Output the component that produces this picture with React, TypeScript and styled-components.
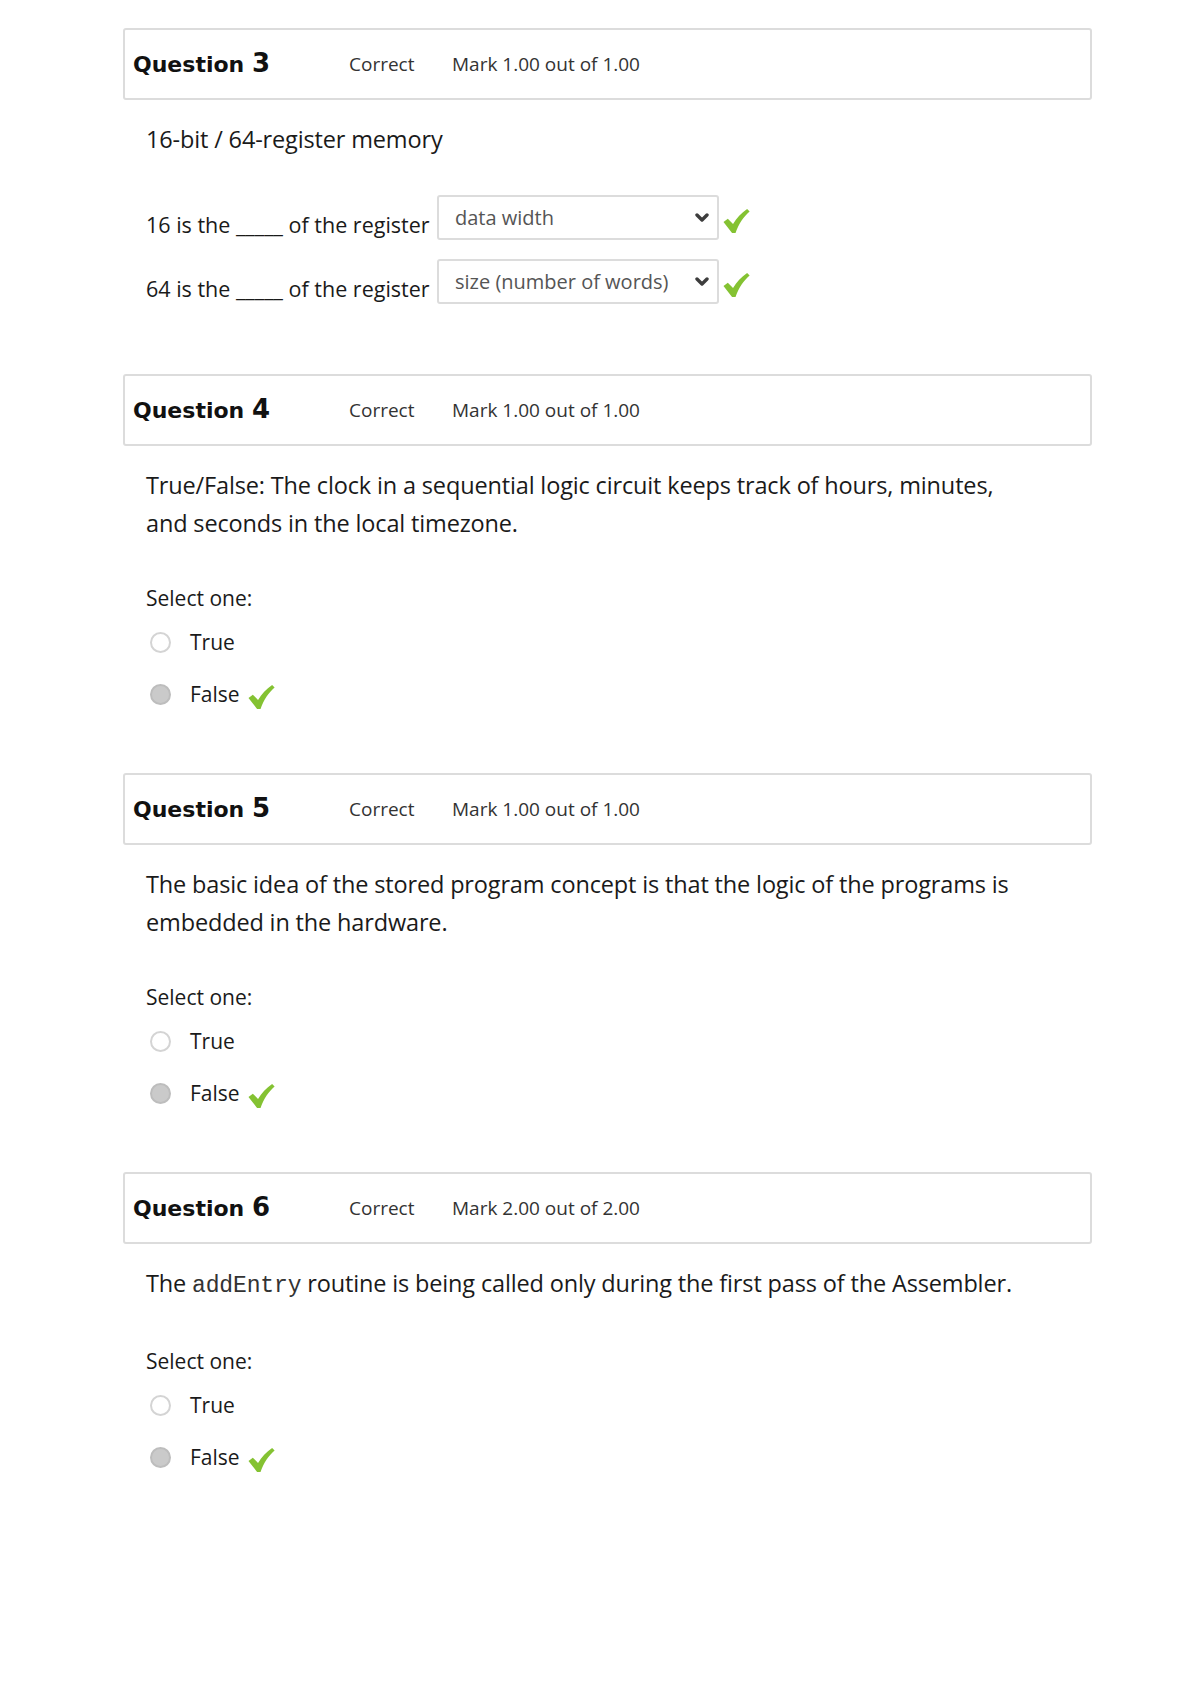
import styled, { createGlobalStyle } from 'styled-components';

const GlobalStyle = createGlobalStyle`
  html, body {
    margin: 0;
    padding: 0;
    background: #fff;
  }
  body {
    font-family: 'Open Sans', 'Noto Sans', sans-serif;
    color: #1a1a1a;
  }
`;

type Choice = { label: string; checked: boolean; correct: boolean };

const choices: Choice[] = [
  { label: 'True', checked: false, correct: false },
  { label: 'False', checked: true, correct: true },
];

const Check = () => (
  <CheckIcon viewBox="0 0 28 26" width="27" height="26">
    <path
      d="M0.5 14 L5 10.6 L10.4 16 C14 10 19 4.5 25 0.5 L27.6 3.2 C21.5 8.5 16.5 15.5 13 25.4 L9.4 25.4 Z"
      fill="#84c232"
    />
  </CheckIcon>
);

const Chevron = () => (
  <svg width="14" height="10" viewBox="0 0 14 10">
    <polyline
      points="2,2 7,7 12,2"
      fill="none"
      stroke="#3d3d3d"
      strokeWidth="3.4"
      strokeLinecap="round"
      strokeLinejoin="round"
    />
  </svg>
);

const Header = ({ num, mark }: { num: number; mark: string }) => (
  <HeaderBox>
    <Title>
      Question <Num>{num}</Num>
    </Title>
    <State>Correct</State>
    <Grade>{mark}</Grade>
  </HeaderBox>
);

const Options = () => (
  <>
    <Prompt>Select one:</Prompt>
    <OptionList>
      {choices.map((c) => (
        <Option key={c.label}>
          <Radio checked={c.checked} />
          <OptionLabel>{c.label}</OptionLabel>
          {c.correct && <Check />}
        </Option>
      ))}
    </OptionList>
  </>
);

const App = () => {
  return (
    <Page>
      <GlobalStyle />
      <Question $gap={70}>
        <Header num={3} mark="Mark 1.00 out of 1.00" />
        <QText>16-bit / 64-register memory</QText>
        <Rows>
          <Row>
            <RowLabel>16 is the _____ of the register</RowLabel>
            <SelectBox>
              <span>data width</span>
              <Chevron />
            </SelectBox>
            <Check />
          </Row>
          <Row>
            <RowLabel>64 is the _____ of the register</RowLabel>
            <SelectBox>
              <span>size (number of words)</span>
              <Chevron />
            </SelectBox>
            <Check />
          </Row>
        </Rows>
      </Question>

      <Question $gap={60}>
        <Header num={4} mark="Mark 1.00 out of 1.00" />
        <QText>
          True/False: The clock in a sequential logic circuit keeps track of hours, minutes, and
          seconds in the local timezone.
        </QText>
        <Options />
      </Question>

      <Question $gap={60}>
        <Header num={5} mark="Mark 1.00 out of 1.00" />
        <QText>
          The basic idea of the stored program concept is that the logic of the programs is
          embedded in the hardware.
        </QText>
        <Options />
      </Question>

      <Question $gap={0}>
        <Header num={6} mark="Mark 2.00 out of 2.00" />
        <QText>
          The <Code>addEntry</Code> routine is being called only during the first pass of the
          Assembler.
        </QText>
        <Options />
      </Question>
    </Page>
  );
};

const Page = styled.div`
  width: 969px;
  min-height: 1699px;
  box-sizing: border-box;
  padding: 28px 0 0;
  margin-left: 123px;
`;

const Question = styled.section<{ $gap: number }>`
  margin-bottom: ${(p) => p.$gap}px;
  padding-left: 23px;
`;

const HeaderBox = styled.div`
  margin-left: -23px;
  height: 72px;
  box-sizing: border-box;
  border: 2px solid #dcdcdc;
  border-radius: 3px;
  display: flex;
  align-items: center;
  padding-left: 8px;
  color: #1a1a1a;
`;

const Title = styled.h3`
  margin: 0;
  width: 216px;
  font-family: 'DejaVu Sans', Verdana, sans-serif;
  font-weight: bold;
  font-size: 22px;
  line-height: 30px;
  color: #111;
`;

const Num = styled.span`
  font-size: 26px;
`;

const State = styled.span`
  width: 103px;
  font-size: 19px;
  color: #333;
`;

const Grade = styled.span`
  font-size: 19px;
  color: #333;
`;

const QText = styled.p`
  margin: 20px 0 0;
  max-width: 885px;
  font-size: 23.5px;
  line-height: 38px;
  color: #1a1a1a;
  letter-spacing: -0.15px;
`;

const Code = styled.code`
  font-family: 'Liberation Mono', 'Courier New', monospace;
  font-size: 23px;
  color: #333;
`;

const Rows = styled.div`
  margin-top: 37px;
  display: flex;
  flex-direction: column;
  gap: 19px;
`;

const Row = styled.div`
  display: flex;
  align-items: flex-end;
`;

const RowLabel = styled.span`
  width: 291px;
  font-size: 21.5px;
  line-height: 30px;
`;

const SelectBox = styled.div`
  width: 282px;
  height: 45px;
  box-sizing: border-box;
  border: 2px solid #dcdcdc;
  border-radius: 3px;
  display: flex;
  align-items: center;
  justify-content: space-between;
  padding: 0 8px 0 16px;
  font-size: 20px;
  color: #555;
`;

const CheckIcon = styled.svg`
  flex: none;
  margin-left: 4px;
  align-self: center;
  margin-top: 6px;
`;

const Prompt = styled.div`
  margin-top: 41px;
  font-size: 21px;
  line-height: 30px;
  color: #1a1a1a;
`;

const OptionList = styled.div`
  margin-top: 10px;
  display: flex;
  flex-direction: column;
  gap: 14px;
`;

const Option = styled.label`
  height: 38px;
  display: flex;
  align-items: center;
  padding-left: 4px;
`;

const Radio = styled.span<{ checked: boolean }>`
  width: 21px;
  height: 21px;
  box-sizing: border-box;
  border-radius: 50%;
  border: 2px solid ${(p) => (p.checked ? '#bdbdbd' : '#d4d4d4')};
  background: ${(p) => (p.checked ? '#cacaca' : '#fff')};
  margin-right: 19px;
`;

const OptionLabel = styled.span`
  font-size: 21px;
  color: #1a1a1a;
  margin-right: 4px;
`;

export default App;
